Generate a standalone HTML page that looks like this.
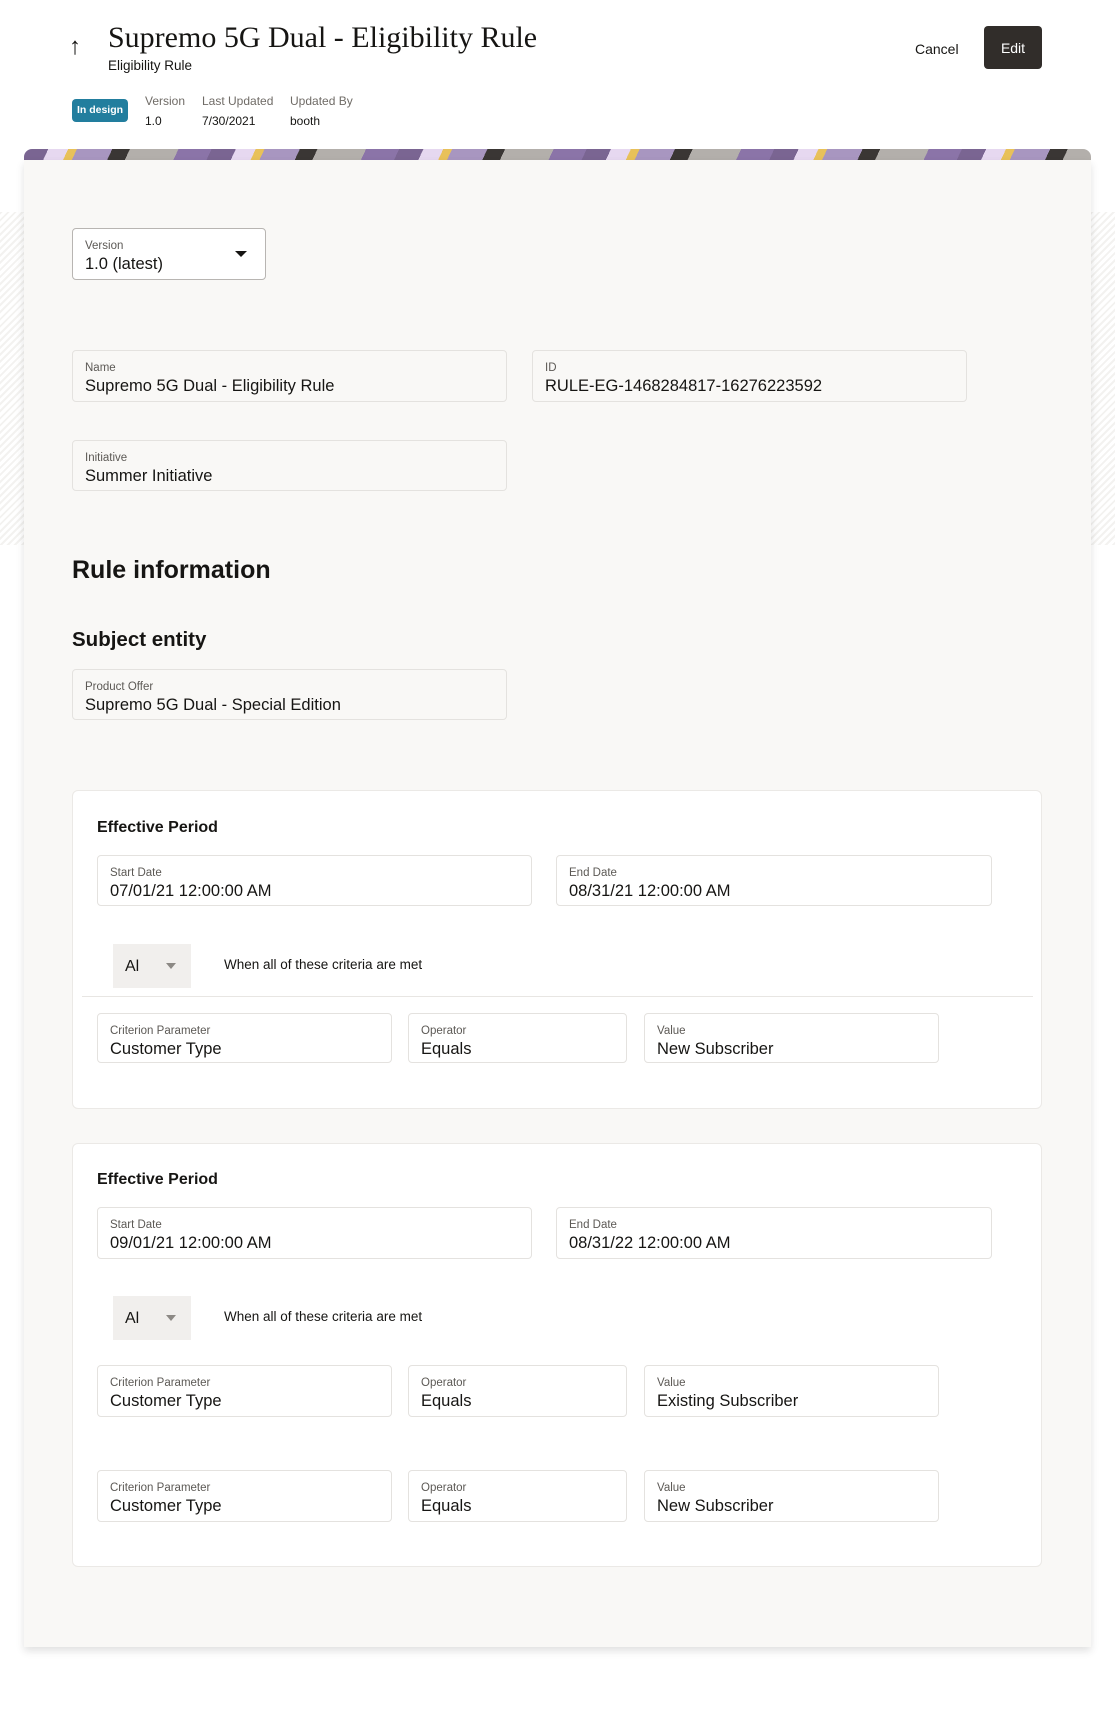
<!DOCTYPE html>
<html><head><meta charset="utf-8"><style>
*{box-sizing:border-box;margin:0;padding:0}
body{width:1115px;height:1721px;background:#fff;font-family:"Liberation Sans",sans-serif;color:#161513;position:relative;overflow:hidden}
.a{position:absolute}
.side{position:absolute;top:212px;height:333px;width:30px;background:repeating-linear-gradient(135deg,#f3f2f0 0 2px,#fff 2px 5px)}
.banner{left:24px;top:149px;width:1067px;height:14px;border-radius:8px 8px 0 0;background:repeating-linear-gradient(115deg,#7a6592 0 22px,#e6d8f0 22px 40px,#e8c15a 40px 48px,#a896c0 48px 80px,#3a3634 80px 96px,#b3afab 96px 140px,#8b74a8 140px 170px)}
.card{left:24px;top:160px;width:1067px;height:1487px;background:#f9f8f6;box-shadow:0 4px 8px rgba(0,0,0,.12)}
.f{position:absolute;border:1px solid #e4e2df;border-radius:4px;padding:11px 12px 0}
.f .l{font-size:11.5px;color:#5c5955;line-height:13px}
.f .v{font-size:16.5px;line-height:20px;margin-top:1px}
.box{position:absolute;background:#fff;border:1px solid #ebe9e6;border-radius:6px}
.h3{font-size:16px;font-weight:bold}
.al{position:absolute;background:#f1efed;width:78px;height:44px;font-size:16px;padding:14px 0 0 12px}
.al:after{content:"";position:absolute;left:53px;top:19px;border:5px solid transparent;border-top:6px solid #8c8985;border-bottom:0}
.crit{position:absolute;font-size:13.5px}
</style></head><body>
<div class="side" style="left:0"></div><div class="side" style="left:1091px;width:24px"></div>
<div class="a" style="left:69px;top:33px;font-size:24px">↑</div>
<div class="a" style="left:108px;top:21px;font-family:'Liberation Serif',serif;font-size:30px">Supremo 5G Dual - Eligibility Rule</div>
<div class="a" style="left:108px;top:58px;font-size:13.5px">Eligibility Rule</div>
<div class="a" style="left:915px;top:41px;font-size:14px">Cancel</div>
<div class="a" style="left:984px;top:26px;width:58px;height:43px;background:#312d2a;border-radius:4px;color:#fff;font-size:14px;text-align:center;line-height:45px">Edit</div>
<div class="a" style="left:72px;top:99px;width:56px;height:23px;background:#227e9e;border-radius:4px;color:#fff;font-size:10.5px;font-weight:bold;text-align:center;line-height:23px">In design</div>
<div class="a" style="left:145px;top:94px;font-size:12px;color:#6f6b66">Version</div>
<div class="a" style="left:145px;top:114px;font-size:12px">1.0</div>
<div class="a" style="left:202px;top:94px;font-size:12px;color:#6f6b66">Last Updated</div>
<div class="a" style="left:202px;top:114px;font-size:12px">7/30/2021</div>
<div class="a" style="left:290px;top:94px;font-size:12px;color:#6f6b66">Updated By</div>
<div class="a" style="left:290px;top:114px;font-size:12px">booth</div>
<div class="a banner"></div>
<div class="a card"></div>
<div class="f" style="left:72px;top:228px;width:194px;height:52px;background:#fff;border-color:#b8b5b2"><div class="l">Version</div><div class="v">1.0 (latest)</div><div class="a" style="left:162px;top:22px;border:6px solid transparent;border-top:6px solid #161513;border-bottom:0"></div></div>
<div class="f" style="left:72px;top:350px;width:435px;height:52px"><div class="l">Name</div><div class="v">Supremo 5G Dual - Eligibility Rule</div></div>
<div class="f" style="left:532px;top:350px;width:435px;height:52px"><div class="l">ID</div><div class="v">RULE-EG-1468284817-16276223592</div></div>
<div class="f" style="left:72px;top:440px;width:435px;height:51px"><div class="l">Initiative</div><div class="v">Summer Initiative</div></div>
<div class="a" style="left:72px;top:556px;font-size:25px;font-weight:bold">Rule information</div>
<div class="a" style="left:72px;top:628px;font-size:20.5px;font-weight:bold">Subject entity</div>
<div class="f" style="left:72px;top:669px;width:435px;height:51px"><div class="l">Product Offer</div><div class="v">Supremo 5G Dual - Special Edition</div></div>

<div class="box" style="left:72px;top:790px;width:970px;height:319px"></div>
<div class="a h3" style="left:97px;top:819px">Effective Period</div>
<div class="f" style="left:97px;top:855px;width:435px;height:51px;background:#fff"><div class="l">Start Date</div><div class="v">07/01/21 12:00:00 AM</div></div>
<div class="f" style="left:556px;top:855px;width:436px;height:51px;background:#fff"><div class="l">End Date</div><div class="v">08/31/21 12:00:00 AM</div></div>
<div class="al" style="left:113px;top:944px">Al</div>
<div class="crit" style="left:224px;top:957px">When all of these criteria are met</div>
<div class="a" style="left:82px;top:996px;width:951px;height:1px;background:#e8e6e3"></div>
<div class="f" style="left:97px;top:1013px;width:295px;height:50px;background:#fff"><div class="l">Criterion Parameter</div><div class="v">Customer Type</div></div>
<div class="f" style="left:408px;top:1013px;width:219px;height:50px;background:#fff"><div class="l">Operator</div><div class="v">Equals</div></div>
<div class="f" style="left:644px;top:1013px;width:295px;height:50px;background:#fff"><div class="l">Value</div><div class="v">New Subscriber</div></div>

<div class="box" style="left:72px;top:1143px;width:970px;height:424px"></div>
<div class="a h3" style="left:97px;top:1171px">Effective Period</div>
<div class="f" style="left:97px;top:1207px;width:435px;height:52px;background:#fff"><div class="l">Start Date</div><div class="v">09/01/21 12:00:00 AM</div></div>
<div class="f" style="left:556px;top:1207px;width:436px;height:52px;background:#fff"><div class="l">End Date</div><div class="v">08/31/22 12:00:00 AM</div></div>
<div class="al" style="left:113px;top:1296px">Al</div>
<div class="crit" style="left:224px;top:1309px">When all of these criteria are met</div>
<div class="f" style="left:97px;top:1365px;width:295px;height:52px;background:#fff"><div class="l">Criterion Parameter</div><div class="v">Customer Type</div></div>
<div class="f" style="left:408px;top:1365px;width:219px;height:52px;background:#fff"><div class="l">Operator</div><div class="v">Equals</div></div>
<div class="f" style="left:644px;top:1365px;width:295px;height:52px;background:#fff"><div class="l">Value</div><div class="v">Existing Subscriber</div></div>
<div class="f" style="left:97px;top:1470px;width:295px;height:52px;background:#fff"><div class="l">Criterion Parameter</div><div class="v">Customer Type</div></div>
<div class="f" style="left:408px;top:1470px;width:219px;height:52px;background:#fff"><div class="l">Operator</div><div class="v">Equals</div></div>
<div class="f" style="left:644px;top:1470px;width:295px;height:52px;background:#fff"><div class="l">Value</div><div class="v">New Subscriber</div></div>
</body></html>
